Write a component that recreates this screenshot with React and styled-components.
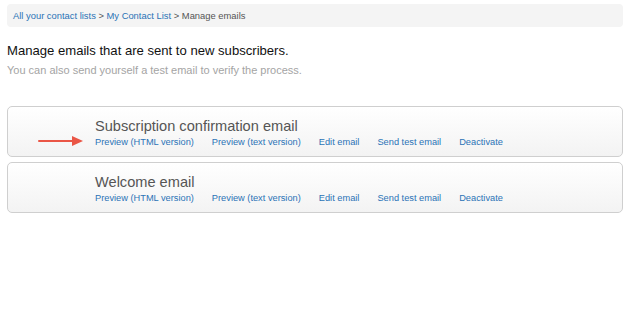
import React from "react";
import styled, { createGlobalStyle } from "styled-components";

const Global = createGlobalStyle`
  html, body { margin: 0; padding: 0; background: #fff; }
  body { font-family: "Liberation Sans", Arial, Helvetica, sans-serif; }
`;

const Page = styled.div`
  padding: 4px 15px 0 7px;
  display: flex;
  flex-direction: column;
`;

const Breadcrumb = styled.nav`
  background: #f4f4f4;
  border-radius: 4px;
  height: 23px;
  display: flex;
  align-items: center;
  padding: 0 6px;
  font-size: 9.4px;
  color: #555;
  white-space: pre;
`;

const Crumb = styled.a`
  color: #2b73b6;
  text-decoration: none;
`;

const Heading = styled.h1`
  margin: 15px 0 0;
  font-size: 13.1px;
  font-weight: normal;
  color: #111;
  line-height: 18px;
`;

const Sub = styled.p`
  margin: 3px 0 0;
  font-size: 11px;
  color: #a4a4a4;
  line-height: 14px;
`;

const List = styled.div`
  margin-top: 29px;
  display: flex;
  flex-direction: column;
  gap: 5px;
`;

const Card = styled.div`
  position: relative;
  box-sizing: border-box;
  height: 51px;
  border: 1px solid #cfcfcf;
  border-radius: 5px;
  background: linear-gradient(#ffffff, #f3f3f3);
  padding: 10px 0 0 87px;
`;

const Title = styled.div`
  font-size: 14.6px;
  color: #555;
  line-height: 18px;
`;

const Links = styled.div`
  display: flex;
  gap: 18px;
  font-size: 9.25px;
  line-height: 14px;
`;

const Link = styled.a`
  color: #2b73b6;
  text-decoration: none;
`;

const Arrow = styled.svg`
  position: absolute;
  left: 30px;
  top: 28px;
`;

const emails = [
  { title: "Subscription confirmation email", arrow: true },
  { title: "Welcome email" },
];

const actions = [
  "Preview (HTML version)",
  "Preview (text version)",
  "Edit email",
  "Send test email",
  "Deactivate",
];

export default function App() {
  return (
    <>
      <Global />
      <Page>
        <Breadcrumb>
          <Crumb href="#">All your contact lists</Crumb>
          {" > "}
          <Crumb href="#">My Contact List</Crumb>
          {" > "}
          <span>Manage emails</span>
        </Breadcrumb>
        <Heading>Manage emails that are sent to new subscribers.</Heading>
        <Sub>You can also send yourself a test email to verify the process.</Sub>
        <List>
          {emails.map((e) => (
            <Card key={e.title}>
              {e.arrow && (
                <Arrow width="46" height="12" viewBox="0 0 46 12">
                  <line x1="1" y1="6" x2="35" y2="6" stroke="#ea5646" strokeWidth="2" strokeLinecap="round" />
                  <polygon points="34,1 45,6 34,11" fill="#ea5646" />
                </Arrow>
              )}
              <Title>{e.title}</Title>
              <Links>
                {actions.map((a) => (
                  <Link key={a} href="#">{a}</Link>
                ))}
              </Links>
            </Card>
          ))}
        </List>
      </Page>
    </>
  );
}
